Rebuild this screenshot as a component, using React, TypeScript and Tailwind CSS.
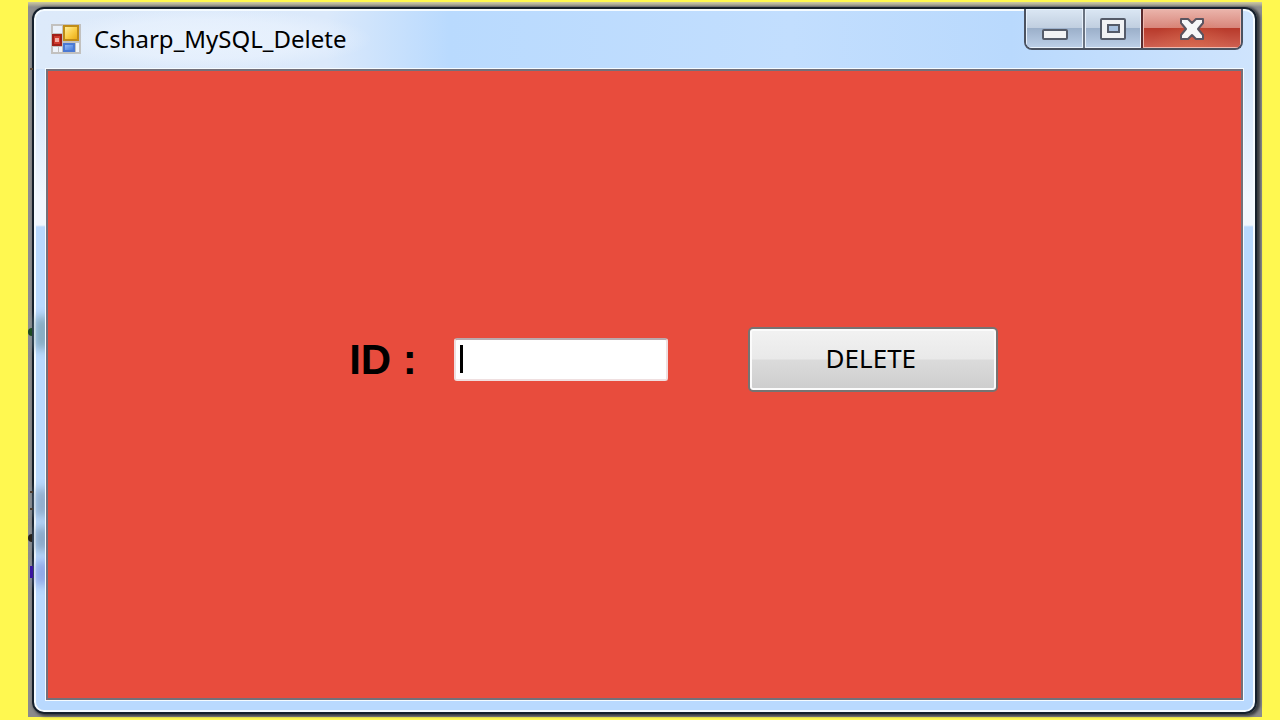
import { useState } from "react";

function FormIcon() {
  return (
    <svg width="30" height="30" viewBox="0 0 30 30" aria-hidden="true" className="shrink-0">
      <defs>
        <linearGradient id="gold" x1="0" y1="0" x2="1" y2="1">
          <stop offset="0" stopColor="#fff3a8" />
          <stop offset="0.5" stopColor="#fbd04a" />
          <stop offset="1" stopColor="#e9a80c" />
        </linearGradient>
        <linearGradient id="blue" x1="0" y1="0" x2="1" y2="1">
          <stop offset="0" stopColor="#9cc3fb" />
          <stop offset="1" stopColor="#3c72d8" />
        </linearGradient>
      </defs>
      <rect x="0" y="0" width="30" height="30" fill="#c2c1bf" />
      <rect x="2" y="2" width="9" height="7" fill="#e9f1fb" />
      <rect x="2" y="23" width="5" height="5" fill="#eef3fa" />
      <rect x="8" y="23" width="3" height="5" fill="#eef3fa" />
      <rect x="25" y="19" width="3" height="9" fill="#eef3fa" />
      <rect x="13" y="2" width="14" height="14" fill="url(#gold)" stroke="#c08c18" strokeWidth="2" />
      <rect x="2" y="11" width="8" height="10" fill="#cf3a2c" stroke="#a02018" strokeWidth="2" />
      <rect x="4" y="14" width="4" height="4" fill="#f3aca2" />
      <rect x="13" y="20" width="10" height="7" fill="url(#blue)" stroke="#4a79d4" strokeWidth="2" />
    </svg>
  );
}

function CaptionButtons() {
  return (
    <div className="flex h-[41px] shrink-0 overflow-hidden rounded-b-lg border-2 border-t-0 border-[#4b5260]">
      <button
        type="button"
        aria-label="Minimize"
        className="flex w-[59px] items-center justify-center border-r-2 border-[#6b7482] bg-[linear-gradient(to_bottom,#dbe7f4_0%,#c1cfe0_48%,#9cb0ca_50%,#bdd0e8_100%)] pt-3 shadow-[inset_0_0_0_1px_#e8f1fb]"
      >
        <svg width="26" height="12" viewBox="0 0 26 12" aria-hidden="true">
          <rect x="1" y="1" width="24" height="9" rx="1" fill="#f1f2f4" stroke="#555b69" strokeWidth="2" />
        </svg>
      </button>
      <button
        type="button"
        aria-label="Maximize"
        className="flex w-[58px] items-center justify-center border-r-2 border-[#5b2a2c] bg-[linear-gradient(to_bottom,#dbe7f4_0%,#c1cfe0_48%,#9cb0ca_50%,#bdd0e8_100%)] shadow-[inset_0_0_0_1px_#e8f1fb]"
      >
        <svg width="26" height="22" viewBox="0 0 26 22" aria-hidden="true">
          <rect x="1" y="1" width="24" height="20" rx="1" fill="#f1f2f4" stroke="#555b69" strokeWidth="2" />
          <rect x="8" y="7" width="11" height="7" fill="#a9c0de" stroke="#555b69" strokeWidth="2" />
        </svg>
      </button>
      <button
        type="button"
        aria-label="Close"
        className="flex w-[98px] items-center justify-center bg-[radial-gradient(ellipse_at_50%_110%,#e0745088,transparent_60%),linear-gradient(to_bottom,#ebb5ac_0%,#d8867b_48%,#b83a2b_50%,#cf6152_100%)] shadow-[inset_0_0_0_1px_#f0b9b0]"
      >
        <svg width="26" height="22" viewBox="0 0 26 22" aria-hidden="true">
          <path
            d="M2 1H9L13 5L17 1H24V5L19 11L24 17V21H17L13 17L9 21H2V17L7 11L2 5Z"
            fill="#f6f6f7"
            stroke="#5a5460"
            strokeWidth="2"
            strokeLinejoin="round"
          />
        </svg>
      </button>
    </div>
  );
}

function GlassSpots() {
  return (
    <div aria-hidden="true" className="pointer-events-none">
      <div className="absolute top-[308px] left-0.5 h-8 w-3 bg-[#7da3b5] blur-[5px]" />
      <div className="absolute top-[480px] left-0.5 h-7 w-3 bg-[#8aa6c4] blur-[5px]" />
      <div className="absolute top-[518px] left-0.5 h-6 w-3 bg-[#82a0bd] blur-[5px]" />
      <div className="absolute top-[552px] left-0.5 h-6 w-3 bg-[#8a9fe2] blur-[5px]" />
      <div className="absolute top-[319px] -left-1.5 h-2 w-1 rounded-l-full bg-[#1d4a20]" />
      <div className="absolute top-[59px] -left-1 h-0.5 w-[3px] bg-[#5c4a38]" />
      <div className="absolute top-[482px] -left-1 h-0.5 w-[3px] bg-[#4a3c30]" />
      <div className="absolute top-[499px] -left-1 h-0.5 w-[3px] bg-[#4a3c30]" />
      <div className="absolute top-[525px] -left-1.5 h-2 w-1 rounded-l-full bg-[#28231d]" />
      <div className="absolute top-[557px] -left-1 h-3 w-[3px] bg-[#3a14a0]" />
    </div>
  );
}

export default function App() {
  const [id, setId] = useState("");

  return (
    <div className="flex min-h-screen flex-col bg-[#fff850] pt-0.5 pr-[18px] pb-[3px] pl-7 font-['Noto_Sans',sans-serif] text-black">
      <div className="flex grow flex-col bg-[linear-gradient(to_bottom,#cfcba0_0px,#8e8e8e_5px,#8b8b8b_100%)] pt-[5px] pr-[5px] pb-[3px] pl-1">
        <div className="relative flex grow flex-col rounded-xl border-2 border-[#15202c] bg-[linear-gradient(to_right,#ddeafa_0%,#dbe9fb_24%,#b9dafe_34%,#c2defe_62%,#b9d9fd_80%,#cfe4fd_100%)] px-3 pb-3 shadow-[inset_0_0_0_2px_#f5fbff,2px_1px_3px_1px_#33373c]">
          <div
            aria-hidden="true"
            className="absolute inset-x-0.5 top-[60px] bottom-0.5 rounded-b-lg bg-[linear-gradient(to_bottom,#cfe3fb_0px,#f1f7fe_130px,#f1f7fe_156px,#b9d9fe_158px,#b9d9fe_100%)]"
          />
          <GlassSpots />
          <header className="flex h-[60px] shrink-0 items-start justify-between">
            <div className="flex h-[60px] items-center gap-[13px] rounded-full bg-[radial-gradient(ellipse_at_center,#ecf4fed0_0%,#ecf4fe90_45%,transparent_72%)] pr-6 pl-[5px]">
              <FormIcon />
              <h1 className="text-[24px] leading-8 whitespace-nowrap">Csharp_MySQL_Delete</h1>
            </div>
            <CaptionButtons />
          </header>
          <main className="relative flex grow items-center justify-center border-2 border-[#74707a] bg-[#e84c3d] pb-[50px] pl-[58px] shadow-[0_0_0_1px_#f5fbff]">
            <form className="flex items-center" onSubmit={(e) => e.preventDefault()}>
              <label
                htmlFor="record-id"
                className="mr-[37px] font-['Liberation_Sans',sans-serif] text-[42px] leading-[48px] font-bold whitespace-pre"
              >
                ID :
              </label>
              <div className="relative mr-20 flex">
                <input
                  id="record-id"
                  type="text"
                  value={id}
                  onChange={(e) => setId(e.target.value)}
                  className="h-[43px] w-[214px] rounded-[3px] border-2 border-[#efdfe0] border-t-[#b9aaae] bg-white px-2 text-2xl outline-none"
                />
                {id === "" && (
                  <span
                    aria-hidden="true"
                    className="pointer-events-none absolute top-[7px] left-1.5 h-7 w-[3px] bg-black"
                  />
                )}
              </div>
              <button
                type="submit"
                className="h-[65px] w-[250px] rounded-[5px] border-2 border-[#777372] bg-[linear-gradient(to_bottom,#f2f2f2_0%,#e9e9e9_49%,#dbdbdb_51%,#cdcdcd_100%)] pr-1 pb-1 text-[26px] leading-8 shadow-[inset_0_0_0_2px_#fbfbfb]"
              >
                DELETE
              </button>
            </form>
          </main>
        </div>
      </div>
    </div>
  );
}
